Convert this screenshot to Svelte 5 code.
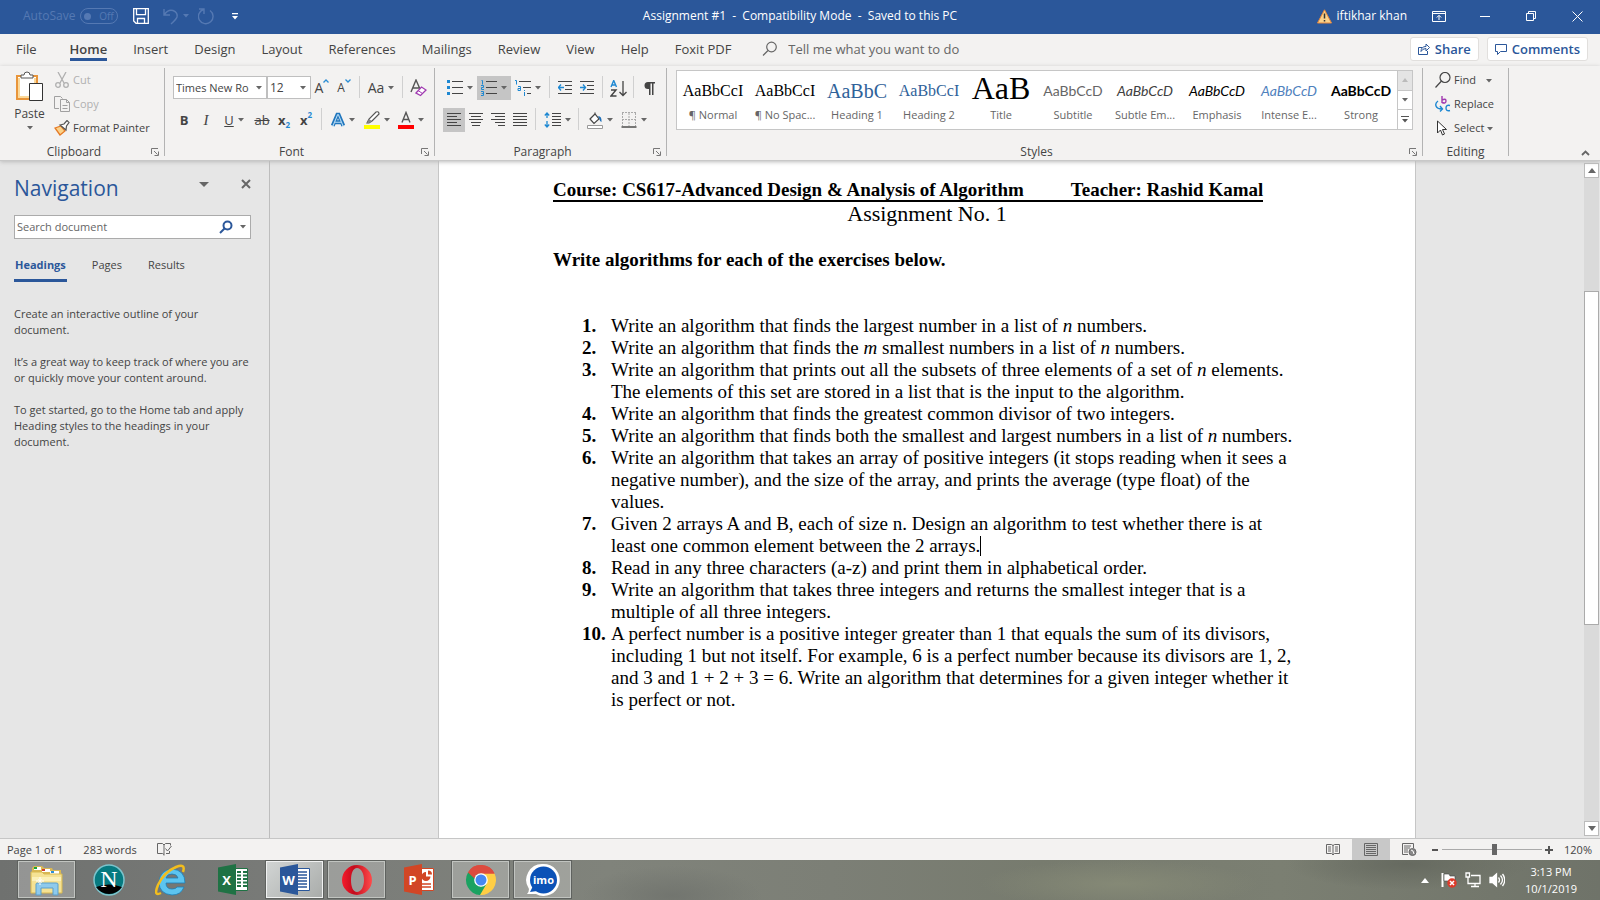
<script lang="ts">
  interface StyleItem {
    sample: string;
    name: string;
    kind: string;
  }

  const tabs = ["File", "Home", "Insert", "Design", "Layout", "References", "Mailings", "Review", "View", "Help", "Foxit PDF"];

  const styles: StyleItem[] = [
    { sample: "AaBbCcI", name: "¶ Normal", kind: "body-text" },
    { sample: "AaBbCcI", name: "¶ No Spac...", kind: "body-text" },
    { sample: "AaBbC", name: "Heading 1", kind: "h1" },
    { sample: "AaBbCcI", name: "Heading 2", kind: "h2" },
    { sample: "AaB", name: "Title", kind: "title" },
    { sample: "AaBbCcD", name: "Subtitle", kind: "subtitle" },
    { sample: "AaBbCcD", name: "Subtle Em...", kind: "subtle" },
    { sample: "AaBbCcD", name: "Emphasis", kind: "emphasis" },
    { sample: "AaBbCcD", name: "Intense E...", kind: "intense" },
    { sample: "AaBbCcD", name: "Strong", kind: "strong" }
  ];

  const apps = [
    { id: "explorer", label: "File Explorer", state: "open" },
    { id: "netscape", label: "Netscape", state: "" },
    { id: "ie", label: "Internet Explorer", state: "" },
    { id: "excel", label: "Excel", state: "" },
    { id: "word", label: "Word", state: "active" },
    { id: "opera", label: "Opera", state: "open" },
    { id: "powerpoint", label: "PowerPoint", state: "" },
    { id: "chrome", label: "Chrome", state: "open" },
    { id: "imo", label: "imo", state: "open" }
  ];

  let activeTab = $state("Home");
  let activePane = $state("Headings");
</script>

{#snippet caret()}
  <svg class="caret" width="6" height="4" viewBox="0 0 6 4"><path d="M0 0h6L3 3.5z" fill="currentColor" /></svg>
{/snippet}

{#snippet launcher(label: string)}
  <button class="launcher" aria-label={label}>
    <svg width="8" height="8" viewBox="0 0 8 8"><path d="M.5 6V.5H7M3 3l3.5 3.5M7.500 3.5v4h-4" fill="none" stroke="#777" /></svg>
  </button>
{/snippet}

{#snippet lines(kind: string)}
  <svg width="16" height="16" viewBox="0 0 16 16" stroke="#444">
    {#if kind === "left"}
      <path d="M1 1.5h14M1 4.500h10M1 7.500h14M1 10.500h10M1 13.500h14" />
    {:else if kind === "center"}
      <path d="M1 1.5h14M3 4.500h10M1 7.500h14M3 10.500h10M4 13.500h8" />
    {:else if kind === "right"}
      <path d="M1 1.5h14M5 4.500h10M1 7.500h14M5 10.500h10M8 13.500h7" />
    {:else}
      <path d="M1 1.5h14M1 4.500h14M1 7.500h14M1 10.500h14M1 13.500h14" />
    {/if}
  </svg>
{/snippet}

{#snippet appIcon(id: string)}
  {#if id === "explorer"}
    <svg width="34" height="32" viewBox="0 0 34 32">
      <path d="M2 4l2-2h8l2 2h8l1 2h8v22H2z" fill="#d9b854" />
      <path d="M4 3h7v3H4z" fill="#fff" /><path d="M4 3h3v2H4z" fill="#18a438" />
      <path d="M12 5h8v3h-8z" fill="#fff" /><path d="M12 5h3v2h-3z" fill="#d23b2a" />
      <path d="M20 7h9v3h-9z" fill="#fff" /><path d="M21 7h3v2h-3z" fill="#2a8fd6" />
      <path d="M1 8h11l2 2h18v19H1z" fill="#f5e294" stroke="#d8b951" />
      <path d="M2 13h29v4H2z" fill="#fbf0b8" />
      <path d="M6 31V20q0-1 2-1h18q2 0 2 1v11h-5v-7H11v7z" fill="#8ecaec" stroke="#5b9fca" />
      <path d="M10 13v8M6 17h8" stroke="#fff" /><path d="M8 15l4 4M12 15l-4 4" stroke="#fff" stroke-width=".6" />
    </svg>
  {:else if id === "netscape"}
    <svg width="32" height="32" viewBox="0 0 32 32">
      <circle cx="16" cy="16" r="15" fill="#067a80" stroke="#7cc4cc" stroke-width="1.5" />
      <path d="M3 23q13-5 26 0-5 7-13 7T3 23z" fill="#000" />
      <text x="16" y="23" text-anchor="middle" font-family="Liberation Serif, serif" font-size="24" fill="#fff">N</text>
    </svg>
  {:else if id === "ie"}
    <svg width="32" height="32" viewBox="0 0 32 32">
      <path d="M30 19H11q0 6 6 6 4 0 5-2h7q-3 8-12 8Q4 30 4 18 5 6 17 5q13 1 13 14zM11 14h12q-1-4-6-4t-6 4z" fill="#5cc4f0" stroke="#1c7fb8" stroke-width=".8" />
      <path d="M6 29Q-2 33 3 21 9 8 21 3q10-4 7 5" fill="none" stroke="#f2bd1d" stroke-width="2.5" />
    </svg>
  {:else if id === "excel" || id === "word" || id === "powerpoint"}
    {@const color = id === "excel" ? "#1f7244" : id === "word" ? "#2a579a" : "#d24625"}
    <svg width="32" height="32" viewBox="0 0 32 32">
      <path d="M16 4.500h14.5v22H16z" fill="#fff" stroke={color} />
      {#if id === "excel"}
        <path d="M20 8h4M26 8h4M20 11.5h4M26 11.5h4M20 15h4M26 15h4M20 18.500h4M26 18.500h4M20 22h4M26 22h4" stroke={color} stroke-width="2" />
      {:else if id === "word"}
        <path d="M19 8h9M19 11h9M19 14h9M19 17h9M19 20h9M19 23h9" stroke={color} stroke-width="1.5" />
      {:else}
        <path d="M23 8a4.500 4.500 0 1 0 4.500 4.500H23z" fill={color} /><path d="M25 6.500a4 4 0 0 1 4 4h-4z" fill={color} />
        <path d="M19 20h9M19 23h9" stroke={color} stroke-width="1.5" />
      {/if}
      <path d="M1 3.500L19 0v31L1 27.500z" fill={color} />
      <text x="9.5" y="20.5" text-anchor="middle" font-family="Open Sans, sans-serif" font-weight="700" font-size="13" fill="#fff">{id === "excel" ? "X" : id === "word" ? "W" : "P"}</text>
    </svg>
  {:else if id === "opera"}
    <svg width="32" height="32" viewBox="0 0 32 32">
      <defs>
        <linearGradient id="operaRing" x1="0" y1="0" x2="1" y2="0"><stop offset="0" stop-color="#f61b2c" /><stop offset=".4" stop-color="#c30b1c" /><stop offset="1" stop-color="#ff4b4b" /></linearGradient>
      </defs>
      <path fill-rule="evenodd" d="M16 1a15 15 0 1 1 0 30 15 15 0 0 1 0-30zm0 3c-4 0-6 5-6 12s2 12 6 12 7-5 7-12-3-12-7-12z" fill="url(#operaRing)" />
    </svg>
  {:else if id === "chrome"}
    <svg width="32" height="32" viewBox="0 0 32 32">
      <path d="M16 16L3 8.500A15 15 0 0 1 29.500 9.500z" fill="#dd4b3e" />
      <path d="M16 16L3 8.500A15 15 0 0 0 15 31z" fill="#1ba261" />
      <path d="M16 16h-.5L15 31A15 15 0 0 0 29.500 9.500H16z" fill="#ffce44" />
      <path d="M16 9.500L3 8.500l7 11z" fill="#1ba261" />
      <path d="M3 8.500A15 15 0 0 1 29.500 9.500H16q-5 0-6.500 5z" fill="#dd4b3e" />
      <path d="M15 31l7-12-5 3q-5 1-7-3L7 21z" fill="#1ba261" />
      <circle cx="16" cy="16" r="6.8" fill="#fff" /><circle cx="16" cy="16" r="5.5" fill="#4688f1" />
    </svg>
  {:else}
    <svg width="34" height="34" viewBox="0 0 34 34">
      <path d="M17 1a16 16 0 1 1-7 30H1q2-2 2-5A16 16 0 0 1 17 1z" fill="#fff" />
      <circle cx="17.5" cy="17" r="13.5" fill="#0b52b7" /><path d="M4 29l3-6 4 5z" fill="#0b52b7" />
      <text x="17.5" y="21" text-anchor="middle" font-family="Open Sans, sans-serif" font-weight="700" font-size="11" fill="#fff">imo</text>
    </svg>
  {/if}
{/snippet}

<div class="desktop">
  <header class="titlebar">
    <div class="quick">
      <span class="autosave">AutoSave</span>
      <button class="toggle"><span class="knob"></span>Off</button>
      <button class="save" aria-label="Save">
        <svg width="16" height="16" viewBox="0 0 16 16" fill="none" stroke="#fff" stroke-width="1.3"><path d="M.7.7h14.600v14.600H3L.7 13zM3.500.7v6h9v-6M4.500 15v-4.500h7V15" /></svg>
      </button>
      <button class="undo" aria-label="Undo">
        <svg width="16" height="17" viewBox="0 0 16 17" fill="none" stroke="#5579b3" stroke-width="1.4"><path d="M1 1v6h6M1.500 6.500Q5 1 10 2.500q5 2 4 6.500-.5 2-6 7" /></svg>
        {@render caret()}
      </button>
      <button class="redo" aria-label="Redo">
        <svg width="17" height="17" viewBox="0 0 17 17" fill="none" stroke="#5579b3" stroke-width="1.4"><path d="M1 1h5v5M5.500 1.500A7.300 7.300 0 1 0 12 2.500" /></svg>
      </button>
      <button class="customize" aria-label="Customize Quick Access Toolbar">
        <svg width="6" height="7" viewBox="0 0 6 7"><path d="M0 0h6v1.200H0zM0 3h6L3 6.500z" fill="#fff" /></svg>
      </button>
    </div>
    <div class="doc-title">Assignment #1&nbsp; -&nbsp; Compatibility Mode&nbsp; -&nbsp; Saved to this PC</div>
    <div class="account">
      <svg width="15" height="15" viewBox="0 0 15 15"><path d="M7.500.8L14.500 14H.5z" fill="#fbd28a" stroke="#e8883a" /><path d="M7.500 4.500v5M7.500 11v1.500" stroke="#333" stroke-width="1.5" /></svg>
      <span>iftikhar khan</span>
      <div class="window-buttons">
        <button aria-label="Ribbon Display Options"><svg width="14" height="11" viewBox="0 0 14 11" fill="none" stroke="#fff"><path d="M.5.5h13v10H.5zM.5 2.500h13M7 9V4.500M4.800 6.500L7 4.300l2.200 2.200" /></svg></button>
        <button aria-label="Minimize"><svg width="10" height="10" viewBox="0 0 10 10"><path d="M0 5.500h10" stroke="#fff" /></svg></button>
        <button aria-label="Restore"><svg width="10" height="10" viewBox="0 0 10 10" fill="none" stroke="#fff"><path d="M.5 2.500h7v7h-7zM2.500 2.500v-2h7v7h-2" /></svg></button>
        <button aria-label="Close"><svg width="11" height="11" viewBox="0 0 11 11"><path d="M.5.5l10 10M10.500.5l-10 10" stroke="#fff" /></svg></button>
      </div>
    </div>
  </header>

  <nav class="tabs">
    {#each tabs as tab}
      <button class="tab" class:active={tab === activeTab} onclick={() => (activeTab = tab)}><span>{tab}</span></button>
    {/each}
    <label class="tell-me">
      <svg width="16" height="16" viewBox="0 0 16 16" fill="none" stroke="#666" stroke-width="1.2"><circle cx="9.5" cy="6" r="4.8" /><path d="M6 9.500L1 14.500" /></svg>
      <input type="text" placeholder="Tell me what you want to do" />
    </label>
    <button class="pill">
      <svg width="12" height="12" viewBox="0 0 12 12" fill="none" stroke="#2b579a"><path d="M4 4.500H.5v7h9V8M3 8.500q0-5 5-5V1l3.500 3.500L8 8V5.500q-3.500 0-5 3z" /></svg>
      Share
    </button>
    <button class="pill">
      <svg width="12" height="11" viewBox="0 0 12 11" fill="none" stroke="#2b579a"><path d="M.5.5h11v7H5.500l-3 3v-3h-2z" /></svg>
      Comments
    </button>
  </nav>

  <section class="ribbon">
    <div class="group clipboard">
      <div class="body">
        <button class="paste">
          <svg width="29" height="31" viewBox="0 0 29 31">
            <path d="M2 5h20v23H2z" fill="#fff" stroke="#e8953a" stroke-width="2" /><path d="M4 7v19h11M20 7v5" fill="none" stroke="#fbd99a" stroke-width="2" />
            <path d="M6 7V4h3q0-3 3-3t3 3h3v3z" fill="#fff" stroke="#555" />
            <path d="M14.500 12.500h13v17h-13z" fill="#fff" stroke="#333" />
          </svg>
          <span>Paste</span>
          {@render caret()}
        </button>
        <div class="stack">
          <button class="off">
            <svg width="16" height="16" viewBox="0 0 16 16" fill="none" stroke="#b0b0b0" stroke-width="1.3"><path d="M4 0l6 11M12 0L6 11" /><circle cx="4" cy="13" r="2.3" /><circle cx="12" cy="13" r="2.3" /></svg>
            Cut
          </button>
          <button class="off">
            <svg width="16" height="16" viewBox="0 0 16 16" fill="none" stroke="#a0a0a0"><path d="M5 12.500H.5v-12h6l2 2M6.500 3.500h6l3 3v9h-9zM12.500 3.500v3h3M8.500 9.500h5M8.500 12.500h5" /></svg>
            Copy
          </button>
          <button>
            <svg width="16" height="16" viewBox="0 0 16 16"><path d="M1 8l6-2 4 5-5 4z" fill="#fbd28a" stroke="#e57a25" stroke-width="1.3" /><path d="M6 5l4-1 3-3.500 2 2L12.500 6 12 10z" fill="#fff" stroke="#555" stroke-width="1.2" /></svg>
            Format Painter
          </button>
        </div>
      </div>
      <footer>Clipboard{@render launcher("Clipboard settings")}</footer>
    </div>

    <div class="group font">
      <div class="body rows">
        <div class="row">
          <span class="combo face"><select aria-label="Font"><option>Times New Ro</option></select>{@render caret()}</span>
          <span class="combo size"><select aria-label="Font size"><option>12</option></select>{@render caret()}</span>
          <button class="tool" aria-label="Increase font size"><span class="grow">A</span><svg class="hat" width="6" height="4" viewBox="0 0 6 4"><path d="M.5 3.500L3 1l2.500 2.500" fill="none" stroke="#2a8dd4" stroke-width="1.3" /></svg></button>
          <button class="tool" aria-label="Decrease font size"><span class="shrink">A</span><svg class="hat" width="6" height="4" viewBox="0 0 6 4"><path d="M.5.5L3 3 5.500.5" fill="none" stroke="#2a8dd4" stroke-width="1.3" /></svg></button>
          <i class="sep"></i>
          <button class="tool split" aria-label="Change case"><span class="grow">Aa</span>{@render caret()}</button>
          <i class="sep"></i>
          <button class="tool" aria-label="Clear formatting">
            <svg width="17" height="18" viewBox="0 0 17 18" fill="none"><path d="M1 13L6 1l4 9M3 9h6" stroke="#555" stroke-width="1.4" /><path d="M6 14l5.500-6 4.500 3-5.500 5.500z" fill="#fff" stroke="#a03ab0" stroke-width="1.3" /><path d="M8 11.500l4.500 3" stroke="#a03ab0" /></svg>
          </button>
        </div>
        <div class="row">
          <button class="tool"><b>B</b></button>
          <button class="tool"><em>I</em></button>
          <button class="tool split"><u>U</u>{@render caret()}</button>
          <button class="tool"><s>ab</s></button>
          <button class="tool"><b>x</b><sub>2</sub></button>
          <button class="tool"><b>x</b><sup>2</sup></button>
          <i class="sep"></i>
          <button class="tool split" aria-label="Text effects"><svg width="14" height="16" viewBox="0 0 16 18"><path d="M2 15.500L7.300 3h1.400L14 15.500M4 11.500h8" fill="none" stroke="#2076bd" stroke-width="4.5" /><path d="M2 16.500L7.500 3h1L14 16.500M4.500 11.500h7" fill="none" stroke="#b8dcf4" stroke-width="1.2" /></svg>{@render caret()}</button>
          <button class="tool split" aria-label="Highlight color"><svg width="16" height="18" viewBox="0 0 16 18"><path d="M0 14h16v4H0z" fill="#ff0" /><path d="M3 12l2-4 7-7q3-1 3 2L8 10l-3 2z" fill="#fff" stroke="#555" stroke-width="1.2" /><path d="M5 8l3 2-3 2-2 0z" fill="#888" /></svg>{@render caret()}</button>
          <button class="tool split" aria-label="Font color"><svg width="16" height="18" viewBox="0 0 16 18"><path d="M0 14h16v4H0z" fill="#f00" /><path d="M4 11.500L8 1.500l4 10M5.300 8.500h5.400" fill="none" stroke="#555" stroke-width="1.4" /></svg>{@render caret()}</button>
        </div>
      </div>
      <footer>Font{@render launcher("Font settings")}</footer>
    </div>

    <div class="group paragraph">
      <div class="body rows">
        <div class="row">
          <button class="tool split" aria-label="Bullets"><svg width="16" height="16" viewBox="0 0 16 16"><path d="M0 0h3v3H0zM0 6h3v3H0zM0 12h3v3H0z" fill="#1e88d2" /><path d="M5 1.500h11M5 7.500h11M5 13.500h11" stroke="#444" /></svg>{@render caret()}</button>
          <button class="tool split pressed" aria-label="Numbering"><svg width="16" height="16" viewBox="0 0 16 16"><path d="M.5.5h1v4M0 5.500h2.500v2H.5v2H3M0 11.500h2.500v4H0M.5 13.500H2" fill="none" stroke="#1e88d2" /><path d="M5 1.500h11M5 7.500h11M5 13.500h11" stroke="#444" /></svg>{@render caret()}</button>
          <button class="tool split" aria-label="Multilevel list"><svg width="16" height="16" viewBox="0 0 16 16"><path d="M0 .5h1.500v4M3 6.500h2.500v4H3v-2h2M9.500 12v4M9.500 10v1" fill="none" stroke="#1e88d2" /><path d="M4 1.500h12M8 7.500h8M12 13.500h4" stroke="#444" /></svg>{@render caret()}</button>
          <i class="sep"></i>
          <button class="tool" aria-label="Decrease indent"><svg width="14" height="14" viewBox="0 0 14 14" fill="none"><path d="M0 .5h14M7 4.500h7M7 8.500h7M0 12.500h14" stroke="#444" /><path d="M0 6.500h6M3 3.500l-2.500 3 2.500 3" stroke="#1e88d2" stroke-width="1.3" /></svg></button>
          <button class="tool" aria-label="Increase indent"><svg width="14" height="14" viewBox="0 0 14 14" fill="none"><path d="M0 .5h14M7 4.500h7M7 8.500h7M0 12.500h14" stroke="#444" /><path d="M0 6.500h6M3 3.500l2.500 3-2.500 3" stroke="#1e88d2" stroke-width="1.3" /></svg></button>
          <i class="sep"></i>
          <button class="tool" aria-label="Sort"><svg width="17" height="17" viewBox="0 0 17 17" fill="none"><path d="M1 7l2.700-6.500L6.500 7M2 5h3.500" stroke="#1e88d2" stroke-width="1.4" /><path d="M1 10h5l-5 6h5.500" stroke="#444" stroke-width="1.4" /><path d="M13 1v14.500M9.500 12l3.500 3.500 3.500-3.500" stroke="#444" stroke-width="1.3" /></svg></button>
          <i class="sep"></i>
          <button class="tool" aria-label="Show paragraph marks"><svg width="11" height="13" viewBox="0 0 11 13"><path d="M4 0h7v1.500H9.500V13H8V1.500H6.500V13H5V7H4a3.500 3.500 0 0 1 0-7z" fill="#444" /></svg></button>
        </div>
        <div class="row">
          <button class="tool pressed" aria-label="Align left">{@render lines("left")}</button>
          <button class="tool" aria-label="Center">{@render lines("center")}</button>
          <button class="tool" aria-label="Align right">{@render lines("right")}</button>
          <button class="tool" aria-label="Justify">{@render lines("justify")}</button>
          <i class="sep"></i>
          <button class="tool split" aria-label="Line spacing"><svg width="17" height="16" viewBox="0 0 17 16" fill="none"><path d="M3 1v5M3 9v6M.8 3.500L3 1l2.200 2.500M.8 12.500L3 15l2.200-2.500" stroke="#1e88d2" stroke-width="1.3" /><path d="M8 1.500h9M8 4.500h9M8 7.500h9M8 10.500h9M8 13.500h9" stroke="#444" /></svg>{@render caret()}</button>
          <i class="sep"></i>
          <button class="tool split" aria-label="Shading"><svg width="16" height="17" viewBox="0 0 16 17"><path d="M.5 13.500h15v3H.5z" fill="#fff" stroke="#999" /><path d="M3 7l5-5 4 5-5 4.500zM8 2V.5" fill="#fff" stroke="#444" stroke-width="1.2" /><path d="M11 4q4 0 3.500 6-2-1-2.500-4z" fill="#1e6fb8" /></svg>{@render caret()}</button>
          <button class="tool split" aria-label="Borders"><svg width="16" height="16" viewBox="0 0 16 16" fill="none"><path d="M1 .5h14M1.500 1v13M14.500 1v13M8 1v13M1 7.500h14" stroke="#aaa" stroke-dasharray="2 1" /><path d="M.5 15h15" stroke="#333" stroke-width="1.3" /></svg>{@render caret()}</button>
        </div>
      </div>
      <footer>Paragraph{@render launcher("Paragraph settings")}</footer>
    </div>

    <div class="group styles">
      <div class="body">
        <div class="gallery">
          {#each styles as item}
            <button class="style {item.kind}">
              <span class="sample">{item.sample}</span>
              <span class="name">{item.name}</span>
            </button>
          {/each}
          <div class="gallery-scroll">
            <button class="dim" aria-label="Previous styles"><svg width="6" height="4" viewBox="0 0 6 4"><path d="M0 4h6L3 0z" fill="#bbb" /></svg></button>
            <button aria-label="Next styles">{@render caret()}</button>
            <button aria-label="More styles"><svg width="8" height="7" viewBox="0 0 8 7"><path d="M0 0h8v1H0zM1 3h6L4 6.500z" fill="#555" /></svg></button>
          </div>
        </div>
      </div>
      <footer>Styles{@render launcher("Styles settings")}</footer>
    </div>

    <div class="group editing">
      <div class="body stack">
        <button>
          <svg width="16" height="16" viewBox="0 0 16 16" fill="none" stroke="#444" stroke-width="1.2"><circle cx="10" cy="5.5" r="5" /><path d="M6.500 9L.5 15.500" /></svg>
          Find <span class="gap">{@render caret()}</span>
        </button>
        <button>
          <svg width="16" height="16" viewBox="0 0 16 16" fill="none" stroke-width="1.4"><path d="M7 0v7M7 4q4-2 4 1t-4 1.500" stroke="#a03ab0" /><path d="M3 5q-3 2-2 5t6 3M5 10l2.500 3L5 15.500M15 9.500q-4-1-4 2.500t4 2.500" stroke="#1e88d2" /></svg>
          Replace
        </button>
        <button>
          <svg width="16" height="16" viewBox="0 0 16 16"><path d="M2.500 1v12l3-3 2 5 2-1-2-4.500h4z" fill="#fff" stroke="#333" /></svg>
          <span>Select{@render caret()}</span>
        </button>
      </div>
      <footer>Editing</footer>
    </div>
    <div class="ribbon-end">
      <button aria-label="Collapse the Ribbon"><svg width="9" height="6" viewBox="0 0 9 6"><path d="M1 5l3.500-3.500L8 5" fill="none" stroke="#666" stroke-width="1.8" /></svg></button>
    </div>
  </section>

  <main class="workspace">
    <aside class="navigation">
      <div class="pane-head">
        <h2>Navigation</h2>
        <button aria-label="Task pane options"><svg width="10" height="5" viewBox="0 0 10 5"><path d="M0 0h10L5 5z" fill="#666" /></svg></button>
        <button aria-label="Close pane"><svg width="10" height="10" viewBox="0 0 10 10"><path d="M1 1l8 8M9 1L1 9" stroke="#666" stroke-width="2" /></svg></button>
      </div>
      <label class="search">
        <input type="text" placeholder="Search document" />
        <svg width="14" height="14" viewBox="0 0 14 14" fill="none" stroke="#2b579a" stroke-width="2"><circle cx="8.5" cy="5.5" r="4" /><path d="M5.500 8.500L1 13" /></svg>
        {@render caret()}
      </label>
      <div class="pane-tabs">
        {#each ["Headings", "Pages", "Results"] as pane}
          <button class:active={pane === activePane} onclick={() => (activePane = pane)}>{pane}</button>
        {/each}
      </div>
      <p>Create an interactive outline of your<br />document.</p>
      <p>It’s a great way to keep track of where you are<br />or quickly move your content around.</p>
      <p>To get started, go to the Home tab and apply<br />Heading styles to the headings in your<br />document.</p>
    </aside>

    <div class="canvas">
      <article class="page">
        <h1><span>Course: CS617-Advanced Design &amp; Analysis of Algorithm</span><span class="teacher">Teacher: Rashid Kamal</span></h1>
        <p class="subtitle-line">Assignment No. 1</p>
        <p class="lead">Write algorithms for each of the exercises below.</p>
        <ol>
          <li>Write an algorithm that finds the largest number in a list of <em>n</em> numbers.</li>
          <li>Write an algorithm that finds the <em>m</em> smallest numbers in a list of <em>n</em> numbers.</li>
          <li>Write an algorithm that prints out all the subsets of three elements of a set of <em>n</em> elements.<br />The elements of this set are stored in a list that is the input to the algorithm.</li>
          <li>Write an algorithm that finds the greatest common divisor of two integers.</li>
          <li>Write an algorithm that finds both the smallest and largest numbers in a list of <em>n</em> numbers.</li>
          <li>Write an algorithm that takes an array of positive integers (it stops reading when it sees a<br />negative number), and the size of the array, and prints the average (type float) of the<br />values.</li>
          <li>Given 2 arrays A and B, each of size n. Design an algorithm to test whether there is at<br />least one common element between the 2 arrays.<i class="cursor"></i></li>
          <li>Read in any three characters (a-z) and print them in alphabetical order.</li>
          <li>Write an algorithm that takes three integers and returns the smallest integer that is a<br />multiple of all three integers.</li>
          <li>A perfect number is a positive integer greater than 1 that equals the sum of its divisors,<br />including 1 but not itself. For example, 6 is a perfect number because its divisors are 1, 2,<br />and 3 and 1 + 2 + 3 = 6. Write an algorithm that determines for a given integer whether it<br />is perfect or not.</li>
        </ol>
      </article>
    </div>

    <div class="scrollbar">
      <button aria-label="Scroll up"><svg width="8" height="5" viewBox="0 0 8 5"><path d="M0 5h8L4 0z" fill="#666" /></svg></button>
      <div class="track"><div class="thumb"></div></div>
      <button aria-label="Scroll down"><svg width="8" height="5" viewBox="0 0 8 5"><path d="M0 0h8L4 5z" fill="#666" /></svg></button>
    </div>
  </main>

  <footer class="status">
    <span>Page 1 of 1</span>
    <span>283 words</span>
    <svg width="15" height="13" viewBox="0 0 15 13" fill="none" stroke="#666"><path d="M7 11.500L5.500 10.500H.5V.5h5L7 2v10.500M7 2L8.500.5h5v2M9 10.500h3.500V8M8.500 5.500l2 2.500 4-5" /></svg>
    <div class="views">
      <button aria-label="Read Mode"><svg width="14" height="13" viewBox="0 0 14 13" fill="none" stroke="#666"><path d="M.5 1.500h5L7 2.500l1.500-1h5v9h-5L7 12l-1.500-1.500h-5zM7 2v10M2 4h3M2 6h3M2 8h3M9 4h3M9 6h3M9 8h3" /></svg></button>
      <button class="current" aria-label="Print Layout"><svg width="14" height="13" viewBox="0 0 14 13" fill="none" stroke="#666"><path d="M.5.5h13v12H.5zM2 2.500h10M2 4.500h10M2 6.500h10M2 8.500h10M2 10.500h10" /></svg></button>
      <button aria-label="Web Layout"><svg width="15" height="13" viewBox="0 0 15 13" fill="none" stroke="#666"><path d="M6 11.500H.5V.5h11V5M2 3h7M2 5h6M2 7h4M2 9h4" /><circle cx="10.5" cy="9" r="3.5" fill="#888" /><path d="M9 7l2 1 1 3" stroke="#fff" /></svg></button>
    </div>
    <button class="zoom-step" aria-label="Zoom out"><svg width="8" height="8" viewBox="0 0 8 8"><path d="M1 4h6" stroke="#555" stroke-width="2" /></svg></button>
    <input class="zoom" type="range" min="0" max="100" value="53" aria-label="Zoom" />
    <button class="zoom-step" aria-label="Zoom in"><svg width="8" height="8" viewBox="0 0 8 8"><path d="M0 4h8M4 0v8" stroke="#555" stroke-width="2" /></svg></button>
    <span class="percent">120%</span>
  </footer>

  <footer class="taskbar">
    {#each apps as app}
      <button class="app {app.state}" aria-label={app.label}>{@render appIcon(app.id)}</button>
    {/each}
    <div class="tray">
      <svg class="more" width="8" height="5" viewBox="0 0 8 5"><path d="M0 5h8L4 0z" fill="#fff" /></svg>
      <svg width="16" height="16" viewBox="0 0 16 16"><path d="M1.500 1v14" stroke="#fff" stroke-width="2" /><path d="M3 2h5l1 2h5v7H9L8 9H3z" fill="#fff" stroke="#444" stroke-width=".6" /><circle cx="11" cy="11" r="4.7" fill="#dd3a2a" /><path d="M9 9l4 4M13 9l-4 4" stroke="#fff" stroke-width="1.5" /></svg>
      <svg width="16" height="16" viewBox="0 0 16 16" fill="none" stroke="#fff" stroke-width="1.3"><path d="M6 3.500h9v8H5.500M10 11.500V14M6 14.500h8M1 1h3.500v4H1zM3 5v6.500h3" /></svg>
      <svg width="16" height="16" viewBox="0 0 16 16" fill="none" stroke="#fff" stroke-width="1.3"><path d="M1 5.500h2.500L7.500 2v12l-4-3.500H1z" fill="#fff" /><path d="M9.500 5.500q2 2.500 0 5M11.500 3.500q4 4.500 0 9M13.500 2q4.500 6 0 12" /></svg>
    </div>
    <div class="clock"><span>3:13 PM</span><span>10/1/2019</span></div>
  </footer>
</div>

<style>
  :global(body) {
    margin: 0;
  }

  .desktop {
    display: flex;
    flex-direction: column;
    height: 100vh;
    min-height: 640px;
    overflow: hidden;
    font-family: "Open Sans", "Noto Sans", sans-serif;
    font-size: 12px;
    line-height: 16px;
    color: #444;
    background: #e6e6e6;
  }

  button,
  input,
  select {
    margin: 0;
    padding: 0;
    border: 0;
    background: none;
    font: inherit;
    color: inherit;
  }

  button {
    display: flex;
    align-items: center;
    justify-content: center;
    white-space: nowrap;
  }

  svg {
    flex: none;
  }

  .caret {
    color: #666;
  }

  /* Title bar */
  .titlebar {
    display: grid;
    grid-template-columns: 1fr auto 1fr;
    align-items: center;
    height: 32px;
    flex: none;
    padding-bottom: 2px;
    background: #2b579a;
    color: #fff;
  }

  .quick {
    display: flex;
    align-items: center;
    padding-left: 23px;
    color: #5579b3;
  }

  .autosave {
    width: 57px;
  }

  .toggle {
    box-sizing: border-box;
    gap: 8px;
    width: 38px;
    height: 16px;
    border: 1px solid #5579b3;
    border-radius: 8px;
    font-size: 10px;
  }

  .knob {
    width: 7px;
    height: 7px;
    border-radius: 50%;
    background: #5579b3;
  }

  .save {
    margin-left: 15px;
  }

  .undo {
    gap: 4px;
    margin-left: 14px;
  }

  .undo .caret {
    color: #5579b3;
  }

  .redo {
    margin-left: 9px;
  }

  .customize {
    margin-left: 17px;
  }

  .account {
    display: flex;
    align-items: center;
    justify-content: flex-end;
    gap: 5px;
  }

  .window-buttons {
    display: flex;
    margin-left: 4px;
  }

  .window-buttons button {
    width: 46px;
    height: 32px;
  }

  /* Ribbon tabs */
  .tabs {
    display: flex;
    align-items: center;
    height: 30px;
    flex: none;
    padding: 0 12px 2px 3px;
    background: #f3f2f1;
    font-size: 13px;
  }

  .tab {
    height: 30px;
    padding: 0 13px;
  }

  .tab:first-child {
    padding-right: 20px;
  }

  .tab span {
    padding: 4px 0 1px;
    border-bottom: 3px solid transparent;
  }

  .tab.active span {
    border-color: #2b579a;
    font-weight: 600;
  }

  .tell-me {
    display: flex;
    align-items: center;
    gap: 10px;
    flex: 1;
    margin-left: 18px;
  }

  .tell-me input {
    flex: 1;
    outline: none;
  }

  .tell-me input::placeholder {
    color: #666;
    opacity: 1;
  }

  .pill {
    box-sizing: border-box;
    gap: 5px;
    height: 24px;
    margin-left: 8px;
    padding: 0 7px;
    border: 1px solid #e1dfdd;
    border-radius: 3px;
    background: #fff;
    color: #2b579a;
    font-weight: 600;
  }

  /* Ribbon */
  .ribbon {
    display: flex;
    height: 94px;
    flex: none;
    background: #f3f2f1;
    border-bottom: 1px solid #c8c8c8;
    box-shadow: 0 1px 4px #bbb;
    position: relative;
  }

  .group {
    display: flex;
    flex-direction: column;
    flex: none;
    margin: 2px 0 4px;
    border-right: 1px solid #b3b3b3;
  }

  .group .body {
    display: flex;
    flex: 1;
  }

  .group footer {
    display: flex;
    align-items: center;
    justify-content: center;
    position: relative;
    height: 8px;
    padding-right: 16px;
  }

  .launcher {
    position: absolute;
    right: 4px;
    bottom: 0;
    width: 10px;
    height: 8px;
  }

  .clipboard {
    width: 164px;
  }

  .font {
    width: 269px;
  }

  .paragraph {
    width: 231px;
  }

  .group.styles {
    flex: 1;
    min-width: 0;
  }

  .editing {
    width: 85px;
  }

  .editing footer {
    padding-right: 0;
  }

  .paste {
    flex-direction: column;
    justify-content: flex-start;
    gap: 4px;
    width: 45px;
    margin: 3px 2px 0 7px;
  }

  .stack {
    display: flex;
    flex-direction: column;
    font-size: 11px;
  }

  .stack button {
    gap: 3px;
    height: 24px;
    justify-content: flex-start;
  }

  .off {
    color: #b0b0b0;
  }

  .group .rows {
    flex-direction: column;
    gap: 8px;
    padding: 8px 0 0 8px;
  }

  .row {
    display: flex;
    height: 24px;
  }

  .tool {
    position: relative;
    width: 22px;
    font-size: 13px;
  }

  .split {
    gap: 4px;
    width: 34px;
  }

  .pressed {
    background: #c5c5c5;
  }

  .grow {
    font-size: 14px;
  }

  .shrink {
    font-size: 12px;
  }

  .hat {
    align-self: flex-start;
    margin-top: 3px;
  }

  .tool em {
    font-family: "Liberation Serif", serif;
    font-size: 15px;
  }

  .tool sub,
  .tool sup {
    font-size: 8px;
    font-weight: 700;
    line-height: 8px;
    color: #1e88d2;
  }

  .tool sub {
    align-self: flex-end;
    margin-bottom: 3px;
  }

  .tool sup {
    align-self: flex-start;
    margin-top: 3px;
  }

  .sep {
    width: 1px;
    height: 22px;
    margin: 0 4px;
    background: #d0d0d0;
  }

  .combo {
    display: flex;
    align-items: center;
    box-sizing: border-box;
    height: 23px;
    padding: 0 4px 0 2px;
    border: 1px solid #bfbfbf;
    background: #fff;
  }

  .combo select {
    flex: 1;
    min-width: 0;
    appearance: none;
  }

  .face {
    width: 94px;
  }

  .face select {
    font-size: 11px;
  }

  .size {
    width: 44px;
  }

  .gallery {
    display: flex;
    flex: 1;
    min-width: 0;
    height: 58px;
    margin: 2px 9px 0;
    border: 1px solid #c6c6c6;
    background: #fff;
  }

  .style {
    flex: 1 1 0;
    min-width: 0;
    flex-direction: column;
    justify-content: flex-start;
  }

  .sample {
    height: 26px;
    margin: 6px 0 4px;
    font-family: "Liberation Serif", serif;
    font-size: 16px;
    line-height: 28px;
    color: #000;
  }

  .name {
    font-size: 11px;
    color: #666;
  }

  .h1 .sample {
    font-size: 20px;
    color: #2f6299;
  }

  .h2 .sample {
    color: #2f6299;
  }

  .title .sample {
    font-size: 32px;
    line-height: 22px;
  }

  .subtitle .sample,
  .subtle .sample,
  .emphasis .sample,
  .intense .sample,
  .strong .sample {
    font-family: Lato, sans-serif;
    font-size: 14px;
  }

  .subtitle .sample {
    color: #666;
  }

  .subtle .sample {
    font-style: italic;
    color: #404040;
  }

  .emphasis .sample {
    font-style: italic;
  }

  .intense .sample {
    font-style: italic;
    color: #4f81bd;
  }

  .strong .sample {
    font-weight: 700;
  }

  .gallery-scroll {
    display: flex;
    flex-direction: column;
    flex: none;
    width: 14px;
    border-left: 1px solid #c6c6c6;
  }

  .gallery-scroll button {
    flex: 1;
  }

  .gallery-scroll button + button {
    border-top: 1px solid #c6c6c6;
  }

  .dim {
    background: #e4e4e4;
  }

  .editing .body {
    padding-left: 12px;
  }

  .gap {
    margin-left: 4px;
  }

  .gap .caret,
  .editing span .caret {
    vertical-align: middle;
    margin-left: 3px;
  }

  .ribbon-end {
    display: flex;
    align-items: flex-end;
    justify-content: flex-end;
    flex: none;
    width: 91px;
    padding: 0 10px 4px 0;
    box-sizing: border-box;
  }

  /* Workspace */
  .workspace {
    display: flex;
    flex: 1;
    min-height: 0;
  }

  .navigation {
    box-sizing: border-box;
    width: 270px;
    flex: none;
    padding: 11px 0 0 14px;
    border-right: 1px solid #bdbdbd;
    font-size: 11px;
  }

  .pane-head {
    display: flex;
    align-items: flex-start;
    padding-right: 18px;
  }

  h2 {
    flex: 1;
    margin: 0;
    font-size: 21px;
    font-weight: 400;
    line-height: 32px;
    color: #2b579a;
  }

  .pane-head button {
    width: 10px;
    height: 24px;
    margin-left: 32px;
  }

  .search {
    display: flex;
    align-items: center;
    gap: 7px;
    box-sizing: border-box;
    height: 24px;
    margin: 11px 18px 0 0;
    padding: 0 4px 0 2px;
    border: 1px solid #ababab;
    background: #fff;
  }

  .search input {
    flex: 1;
    min-width: 0;
    outline: none;
  }

  .search input::placeholder {
    color: #666;
    opacity: 1;
  }

  .pane-tabs {
    display: flex;
    gap: 24px;
    margin: 15px 0 24px;
  }

  .pane-tabs button {
    height: 28px;
    padding: 0 1px 3px;
    border-bottom: 3px solid transparent;
    box-sizing: border-box;
  }

  .pane-tabs .active {
    border-color: #2b579a;
    color: #2b579a;
    font-weight: 700;
  }

  .navigation p {
    margin: 0 0 16px;
    white-space: nowrap;
  }

  .canvas {
    display: flex;
    flex: 1;
    justify-content: center;
    min-width: 0;
    overflow: hidden;
  }

  .page {
    box-sizing: border-box;
    width: 978px;
    padding: 18px 114px 0;
    border: solid #c6c6c6;
    border-width: 0 1px;
    background: #fff;
    font-family: "Liberation Serif", "Times New Roman", serif;
    font-size: 19px;
    line-height: 22px;
    color: #000;
  }

  h1 {
    display: inline-block;
    margin: 0;
    font-size: 19px;
    line-height: 20px;
    white-space: nowrap;
    border-bottom: 2px solid #000;
  }

  .teacher {
    margin-left: 47px;
  }

  .subtitle-line {
    margin: 0;
    text-align: center;
    font-size: 22px;
    line-height: 24px;
  }

  .lead {
    margin: 23px 0 44px;
    font-weight: 700;
  }

  ol {
    margin: 0;
    padding: 0;
    list-style: none;
    counter-reset: exercise;
  }

  li {
    padding-left: 58px;
    white-space: nowrap;
    counter-increment: exercise;
  }

  li::before {
    content: counter(exercise) ".";
    display: inline-block;
    width: 29px;
    margin-left: -29px;
    font-weight: 700;
  }

  .cursor {
    display: inline-block;
    width: 1px;
    height: 20px;
    vertical-align: -4px;
    background: #000;
  }

  .scrollbar {
    display: flex;
    flex-direction: column;
    width: 16px;
    padding: 2px 0;
  }

  .scrollbar button {
    box-sizing: border-box;
    width: 15px;
    height: 15px;
    border: 1px solid #bbb;
    background: #fff;
  }

  .track {
    flex: 1;
    width: 15px;
    padding-top: 113px;
    box-sizing: border-box;
    background: #dadada;
  }

  .thumb {
    box-sizing: border-box;
    height: 63%;
    border: 1px solid #ababab;
    background: #fff;
  }

  /* Status bar */
  .status {
    display: flex;
    align-items: center;
    height: 21px;
    flex: none;
    padding: 0 8px 0 7px;
    border-top: 1px solid #c6c6c6;
    background: #f3f2f1;
    font-size: 11px;
  }

  .status > span {
    margin-right: 20px;
  }

  .views {
    display: flex;
    align-self: stretch;
    margin-left: auto;
  }

  .views button {
    width: 38px;
  }

  .views .current {
    background: #c8c8c8;
  }

  .zoom-step {
    width: 14px;
  }

  .zoom {
    width: 100px;
    height: 14px;
    appearance: none;
    background: linear-gradient(#aaa, #aaa) center / 100% 1px no-repeat;
  }

  .zoom::-webkit-slider-thumb {
    appearance: none;
    width: 5px;
    height: 11px;
    background: #666;
  }

  .status .percent {
    margin: 0 0 0 8px;
  }

  /* Windows taskbar */
  .taskbar {
    display: flex;
    gap: 3px;
    height: 40px;
    flex: none;
    padding-left: 17px;
    background:
      radial-gradient(90px 30px at 42% 90%, #72756f, transparent),
      radial-gradient(140px 24px at 70% 60%, #858976, transparent),
      radial-gradient(120px 26px at 88% 10%, #666a60, transparent),
      linear-gradient(90deg, #6f716f, #7a7c79 20%, #80837b 38%, #7c7f76 52%, #777b6e 65%, #7b7f72 80%, #6f7369);
    color: #fff;
  }

  .app {
    box-sizing: border-box;
    width: 59px;
    height: 39px;
    border: 1px solid transparent;
  }

  .open {
    border-color: #5f625f;
    background: rgb(255 255 255 / 0.25);
    outline: 1px solid #c1c4c0;
    outline-offset: -2px;
  }

  .app.active {
    border-color: #5f625f;
    background: linear-gradient(135deg, #d2d5d4, #a9acaa);
    outline: 1px solid #f1f2f2;
    outline-offset: -2px;
  }

  .tray {
    display: flex;
    align-items: center;
    gap: 8px;
    margin-left: auto;
  }

  .more {
    margin-right: 4px;
  }

  .clock {
    display: flex;
    flex-direction: column;
    align-items: center;
    justify-content: center;
    width: 86px;
    margin-right: 6px;
    font-size: 11px;
    line-height: 17px;
  }
</style>
